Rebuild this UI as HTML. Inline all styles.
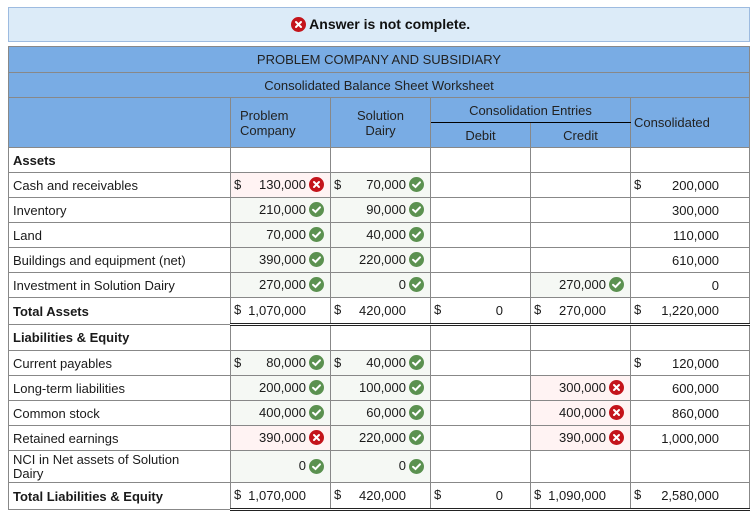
<!DOCTYPE html>
<html><head><meta charset="utf-8"><style>
body{margin:0;background:#fff;font-family:"Liberation Sans",Arial,sans-serif;font-size:13px;color:#1a1a1a;width:752px;height:527px;overflow:hidden;position:relative}
.ban{position:absolute;left:8px;top:7px;width:742px;height:35px;background:#dcebf8;border:1px solid #9dbbe0;box-sizing:border-box;text-align:center;font-weight:bold;font-size:14px;line-height:33px;color:#111}
.ic{display:inline-block;width:15px;height:15px;border-radius:50%;vertical-align:middle;position:relative;top:-1px}
.x{background:#c4141b}.ok{background:#5b9150}
.ic svg{position:absolute;left:0;top:0}
table{position:absolute;left:8px;top:46px;border-collapse:collapse;table-layout:fixed;width:741px}
td{border:1px solid #888;padding:0;height:24px;white-space:nowrap;overflow:hidden}
.h td{background:#79ace4;text-align:center;font-size:13px;color:#222}
.lab{padding-left:4px}
.b{font-weight:bold}
.n{text-align:right;position:relative;padding-right:6px}
.n .d{position:absolute;left:3px;top:4px}
.g{background:#f5f8f4}.r{background:#fff3f3}
.np{padding-right:30px}
.tot td.n{border-bottom:3px double #222}
.ic{margin-left:3px}
</style></head><body>
<div class="ban"><span class="ic x"><svg width="15" height="15"><path d="M5 5L10 10M10 5L5 10" stroke="#fff" stroke-width="2" stroke-linecap="round"/></svg></span> Answer is not complete.</div>
<table>
<colgroup><col style="width:222px"><col style="width:100px"><col style="width:100px"><col style="width:100px"><col style="width:100px"><col style="width:119px"></colgroup>
<tr class="h"><td colspan="6" style="height:25px">PROBLEM COMPANY AND SUBSIDIARY</td></tr>
<tr class="h"><td colspan="6" style="height:24px">Consolidated Balance Sheet Worksheet</td></tr>
<tr class="h"><td rowspan="2"></td><td rowspan="2" style="text-align:left;padding-left:9px;line-height:15px">Problem<br>Company</td><td rowspan="2" style="line-height:15px">Solution<br>Dairy</td><td colspan="2" style="height:24px;border-bottom:1px solid #000">Consolidation Entries</td><td rowspan="2" style="text-align:left;padding-left:3px">Consolidated</td></tr>
<tr class="h"><td style="height:24px">Debit</td><td>Credit</td></tr>
<tr><td class="lab b">Assets</td><td></td><td></td><td></td><td></td><td></td></tr>
<tr><td class="lab">Cash and receivables</td><td class="n r"><span class="d">$</span>130,000<span class="ic x"><svg width="15" height="15"><path d="M5 5L10 10M10 5L5 10" stroke="#fff" stroke-width="2" stroke-linecap="round"/></svg></span></td><td class="n g"><span class="d">$</span>70,000<span class="ic ok"><svg width="15" height="15"><path d="M4 7.8L6.5 10L11 5.3" stroke="#fff" stroke-width="2" fill="none" stroke-linecap="round"/></svg></span></td><td></td><td></td><td class="n np"><span class="d">$</span>200,000</td></tr>
<tr><td class="lab">Inventory</td><td class="n g">210,000<span class="ic ok"><svg width="15" height="15"><path d="M4 7.8L6.5 10L11 5.3" stroke="#fff" stroke-width="2" fill="none" stroke-linecap="round"/></svg></span></td><td class="n g">90,000<span class="ic ok"><svg width="15" height="15"><path d="M4 7.8L6.5 10L11 5.3" stroke="#fff" stroke-width="2" fill="none" stroke-linecap="round"/></svg></span></td><td></td><td></td><td class="n np">300,000</td></tr>
<tr><td class="lab">Land</td><td class="n g">70,000<span class="ic ok"><svg width="15" height="15"><path d="M4 7.8L6.5 10L11 5.3" stroke="#fff" stroke-width="2" fill="none" stroke-linecap="round"/></svg></span></td><td class="n g">40,000<span class="ic ok"><svg width="15" height="15"><path d="M4 7.8L6.5 10L11 5.3" stroke="#fff" stroke-width="2" fill="none" stroke-linecap="round"/></svg></span></td><td></td><td></td><td class="n np">110,000</td></tr>
<tr><td class="lab">Buildings and equipment (net)</td><td class="n g">390,000<span class="ic ok"><svg width="15" height="15"><path d="M4 7.8L6.5 10L11 5.3" stroke="#fff" stroke-width="2" fill="none" stroke-linecap="round"/></svg></span></td><td class="n g">220,000<span class="ic ok"><svg width="15" height="15"><path d="M4 7.8L6.5 10L11 5.3" stroke="#fff" stroke-width="2" fill="none" stroke-linecap="round"/></svg></span></td><td></td><td></td><td class="n np">610,000</td></tr>
<tr><td class="lab">Investment in Solution Dairy</td><td class="n g">270,000<span class="ic ok"><svg width="15" height="15"><path d="M4 7.8L6.5 10L11 5.3" stroke="#fff" stroke-width="2" fill="none" stroke-linecap="round"/></svg></span></td><td class="n g">0<span class="ic ok"><svg width="15" height="15"><path d="M4 7.8L6.5 10L11 5.3" stroke="#fff" stroke-width="2" fill="none" stroke-linecap="round"/></svg></span></td><td></td><td class="n g">270,000<span class="ic ok"><svg width="15" height="15"><path d="M4 7.8L6.5 10L11 5.3" stroke="#fff" stroke-width="2" fill="none" stroke-linecap="round"/></svg></span></td><td class="n np">0</td></tr>
<tr class="tot"><td class="lab b" style="height:26px">Total Assets</td><td class="n" style="padding-right:24px"><span class="d">$</span>1,070,000</td><td class="n" style="padding-right:24px"><span class="d">$</span>420,000</td><td class="n" style="padding-right:27px"><span class="d">$</span>0</td><td class="n" style="padding-right:24px"><span class="d">$</span>270,000</td><td class="n np"><span class="d">$</span>1,220,000</td></tr>
<tr><td class="lab b">Liabilities &amp; Equity</td><td></td><td></td><td></td><td></td><td></td></tr>
<tr><td class="lab">Current payables</td><td class="n g"><span class="d">$</span>80,000<span class="ic ok"><svg width="15" height="15"><path d="M4 7.8L6.5 10L11 5.3" stroke="#fff" stroke-width="2" fill="none" stroke-linecap="round"/></svg></span></td><td class="n g"><span class="d">$</span>40,000<span class="ic ok"><svg width="15" height="15"><path d="M4 7.8L6.5 10L11 5.3" stroke="#fff" stroke-width="2" fill="none" stroke-linecap="round"/></svg></span></td><td></td><td></td><td class="n np"><span class="d">$</span>120,000</td></tr>
<tr><td class="lab">Long-term liabilities</td><td class="n g">200,000<span class="ic ok"><svg width="15" height="15"><path d="M4 7.8L6.5 10L11 5.3" stroke="#fff" stroke-width="2" fill="none" stroke-linecap="round"/></svg></span></td><td class="n g">100,000<span class="ic ok"><svg width="15" height="15"><path d="M4 7.8L6.5 10L11 5.3" stroke="#fff" stroke-width="2" fill="none" stroke-linecap="round"/></svg></span></td><td></td><td class="n r">300,000<span class="ic x"><svg width="15" height="15"><path d="M5 5L10 10M10 5L5 10" stroke="#fff" stroke-width="2" stroke-linecap="round"/></svg></span></td><td class="n np">600,000</td></tr>
<tr><td class="lab">Common stock</td><td class="n g">400,000<span class="ic ok"><svg width="15" height="15"><path d="M4 7.8L6.5 10L11 5.3" stroke="#fff" stroke-width="2" fill="none" stroke-linecap="round"/></svg></span></td><td class="n g">60,000<span class="ic ok"><svg width="15" height="15"><path d="M4 7.8L6.5 10L11 5.3" stroke="#fff" stroke-width="2" fill="none" stroke-linecap="round"/></svg></span></td><td></td><td class="n r">400,000<span class="ic x"><svg width="15" height="15"><path d="M5 5L10 10M10 5L5 10" stroke="#fff" stroke-width="2" stroke-linecap="round"/></svg></span></td><td class="n np">860,000</td></tr>
<tr><td class="lab">Retained earnings</td><td class="n r">390,000<span class="ic x"><svg width="15" height="15"><path d="M5 5L10 10M10 5L5 10" stroke="#fff" stroke-width="2" stroke-linecap="round"/></svg></span></td><td class="n g">220,000<span class="ic ok"><svg width="15" height="15"><path d="M4 7.8L6.5 10L11 5.3" stroke="#fff" stroke-width="2" fill="none" stroke-linecap="round"/></svg></span></td><td></td><td class="n r">390,000<span class="ic x"><svg width="15" height="15"><path d="M5 5L10 10M10 5L5 10" stroke="#fff" stroke-width="2" stroke-linecap="round"/></svg></span></td><td class="n np">1,000,000</td></tr>
<tr><td class="lab" style="height:31px;line-height:14px;white-space:normal">NCI in Net assets of Solution<br>Dairy</td><td class="n g">0<span class="ic ok"><svg width="15" height="15"><path d="M4 7.8L6.5 10L11 5.3" stroke="#fff" stroke-width="2" fill="none" stroke-linecap="round"/></svg></span></td><td class="n g">0<span class="ic ok"><svg width="15" height="15"><path d="M4 7.8L6.5 10L11 5.3" stroke="#fff" stroke-width="2" fill="none" stroke-linecap="round"/></svg></span></td><td></td><td></td><td></td></tr>
<tr class="tot"><td class="lab b" style="height:26px">Total Liabilities &amp; Equity</td><td class="n" style="padding-right:24px"><span class="d">$</span>1,070,000</td><td class="n" style="padding-right:24px"><span class="d">$</span>420,000</td><td class="n" style="padding-right:27px"><span class="d">$</span>0</td><td class="n" style="padding-right:24px"><span class="d">$</span>1,090,000</td><td class="n np"><span class="d">$</span>2,580,000</td></tr>
</table>
</body></html>
